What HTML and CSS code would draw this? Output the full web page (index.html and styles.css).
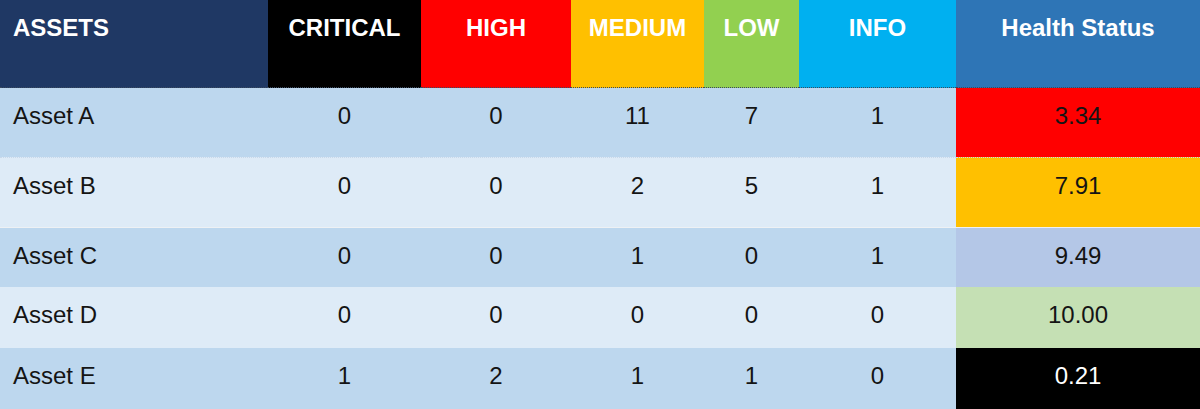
FILE: index.html
```html
<!DOCTYPE html>
<html>
<head>
<meta charset="utf-8">
<link rel="stylesheet" href="styles.css">
</head>
<body>
<div class="grid">
  <div class="cell head left c-assets">ASSETS</div>
  <div class="cell head c-critical">CRITICAL</div>
  <div class="cell head c-high">HIGH</div>
  <div class="cell head c-medium">MEDIUM</div>
  <div class="cell head c-low">LOW</div>
  <div class="cell head c-info">INFO</div>
  <div class="cell head c-health">Health Status</div>

  <div class="cell left odd">Asset A</div>
  <div class="cell odd">0</div>
  <div class="cell odd">0</div>
  <div class="cell odd">11</div>
  <div class="cell odd">7</div>
  <div class="cell odd">1</div>
  <div class="cell hs-red">3.34</div>

  <div class="cell left even sep">Asset B</div>
  <div class="cell even sep">0</div>
  <div class="cell even sep">0</div>
  <div class="cell even sep">2</div>
  <div class="cell even sep">5</div>
  <div class="cell even sep">1</div>
  <div class="cell hs-amber sep">7.91</div>

  <div class="cell left odd sep-light">Asset C</div>
  <div class="cell odd sep-light">0</div>
  <div class="cell odd sep-light">0</div>
  <div class="cell odd sep-light">1</div>
  <div class="cell odd sep-light">0</div>
  <div class="cell odd sep-light">1</div>
  <div class="cell hs-blue sep-light">9.49</div>

  <div class="cell left even">Asset D</div>
  <div class="cell even">0</div>
  <div class="cell even">0</div>
  <div class="cell even">0</div>
  <div class="cell even">0</div>
  <div class="cell even">0</div>
  <div class="cell hs-green">10.00</div>

  <div class="cell left odd">Asset E</div>
  <div class="cell odd">1</div>
  <div class="cell odd">2</div>
  <div class="cell odd">1</div>
  <div class="cell odd">1</div>
  <div class="cell odd">0</div>
  <div class="cell hs-black">0.21</div>
</div>
</body>
</html>
```

FILE: styles.css
```css
html, body {
  margin: 0;
  padding: 0;
  background: #ffffff;
}

.grid {
  display: grid;
  width: 1200px;
  grid-template-columns: 268px 153px 150px 133px 95px 157px 244px;
  grid-template-rows: 88px 69px 70px 60px 61px 61px;
  font-family: "Liberation Sans", Arial, sans-serif;
  font-size: 24px;
  line-height: 28px;
  color: #141414;
}

.cell {
  box-sizing: border-box;
  padding-top: 14px;
  text-align: center;
  white-space: nowrap;
}

.left {
  text-align: left;
  padding-left: 13px;
}

.head {
  color: #ffffff;
  font-weight: bold;
  border-bottom: 1px dotted #3a4a5e;
}

.c-assets { background: #1f3864; }
.c-critical { background: #000000; }
.c-high { background: #ff0000; }
.c-medium { background: #ffc000; }
.c-low { background: #92d050; }
.c-info { background: #00b0f0; }
.c-health { background: #2e75b6; }

.odd { background: #bdd7ee; }
.even { background: #deebf7; }

.sep { border-top: 1px dotted #c8d8ea; }
.sep-light { border-top: 1px solid #eef1f4; }

.hs-red { background: #ff0000; }
.hs-amber { background: #ffc000; }
.hs-blue { background: #b4c7e7; }
.hs-green { background: #c5e0b4; }
.hs-black { background: #000000; color: #ffffff; }
```
